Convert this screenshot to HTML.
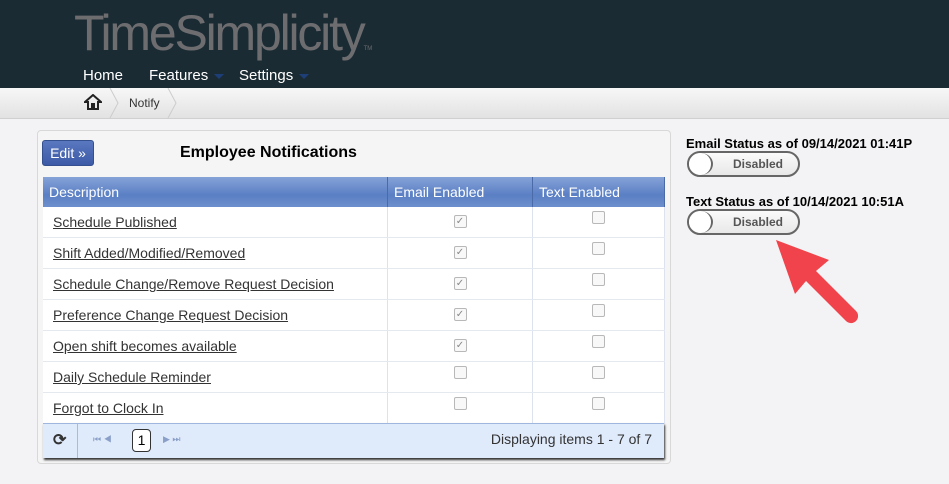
<!DOCTYPE html>
<html><head><style>
body{margin:0;width:949px;height:484px;background:#f3f3f5;font-family:"Liberation Sans",sans-serif;position:relative;overflow:hidden}
.hdr{position:absolute;left:0;top:0;width:949px;height:88px;background:#1b2b33}
.logo{position:absolute;left:74px;top:4px;font-size:50px;color:#6d6d70;letter-spacing:-2.2px}
.nav{position:absolute;top:67px;font-size:15px;color:#fff}
.tri{display:inline-block;border-left:5px solid transparent;border-right:5px solid transparent;border-top:5px solid #1e3e78;margin-left:6px;vertical-align:middle}
.bc{position:absolute;top:88px;left:0;width:949px;height:30px;background:linear-gradient(#f7f7f7,#e2e2e2);border-bottom:1px solid #d0d0d0}
.panel{position:absolute;left:37px;top:130px;width:632px;height:332px;border:1px solid #d8d8d8;border-radius:4px;background:#f5f5f5}
.edit{position:absolute;left:42px;top:140px;width:50px;height:24px;background:linear-gradient(#5a78c0,#3c5aa6);border:1px solid #34508f;border-radius:3px;color:#fff;font-size:14px;line-height:24px;text-align:center}
.title{position:absolute;left:180px;top:144px;font-size:16px;font-weight:bold}
table{position:absolute;left:43px;top:177px;width:622px;border-collapse:collapse;font-size:14px}
th{height:28px;background:linear-gradient(#86a3d8,#5a7fc4 60%,#6d8fcc);color:#fff;font-weight:normal;text-align:left;padding-left:6px;border-right:1px solid #4a6aa8}
td{height:30px;border-bottom:1px solid #e4e8ef;border-right:1px solid #dce3ee;background:#fff;padding:0}
td.d{padding-left:10px}td.d span{text-decoration:underline;color:#333}
td.c{text-align:center}
.cb{display:inline-block;width:11px;height:11px;border:1px solid #b8b8b8;border-radius:2px;background:#f8f8f8;position:relative;top:-3px;font-size:10px;line-height:11px;color:#888}
.ft{position:absolute;left:43px;top:423px;width:621px;height:34px;background:#dfeafb;border-top:1px solid #9fb6dd;box-shadow:1px 2px 2px #333}
.st{position:absolute;left:686px;font-size:13px;font-weight:bold}
.tg{position:absolute;left:687px;width:109px;height:22px;border:2px solid #666;border-radius:13px;background:linear-gradient(#fafafa,#e8e8e8);font-size:12px;color:#555;font-weight:bold}
.tg i{position:absolute;left:0;top:0;width:22px;height:22px;border-right:2px solid #666;border-radius:50%;background:#fff}
.tg span{position:absolute;left:44px;top:4px}
</style></head><body>
<div class="hdr"><div class="logo">TimeSimplicity<span style="font-size:6px;letter-spacing:0">TM</span></div>
<div class="nav" style="left:83px">Home</div><div class="nav" style="left:149px">Features<span class="tri"></span></div><div class="nav" style="left:239px">Settings<span class="tri"></span></div></div>
<div class="bc"><svg style="position:absolute;left:84px;top:6px" width="18" height="16" viewBox="0 0 18 16"><path d="M9 1L1 8h3v7h4v-5h2v5h4V8h3z" fill="none" stroke="#222" stroke-width="2"/></svg>
<svg style="position:absolute;left:108px;top:0" width="70" height="30"><path d="M2 0l8 15-8 15M60 0l8 15-8 15" fill="none" stroke="#ccc"/></svg>
<span style="position:absolute;left:129px;top:8px;font-size:12px;color:#333">Notify</span></div>
<div class="panel"></div>
<div class="edit">Edit »</div><div class="title">Employee Notifications</div>
<table><tr><th style="width:337px">Description</th><th style="width:137px">Email Enabled</th><th>Text Enabled</th></tr>
<tr><td class="d"><span>Schedule Published</span></td><td class="c"><span class="cb">✓</span></td><td class="c"><span class="cb"></span></td></tr>
<tr><td class="d"><span>Shift Added/Modified/Removed</span></td><td class="c"><span class="cb">✓</span></td><td class="c"><span class="cb"></span></td></tr>
<tr><td class="d"><span>Schedule Change/Remove Request Decision</span></td><td class="c"><span class="cb">✓</span></td><td class="c"><span class="cb"></span></td></tr>
<tr><td class="d"><span>Preference Change Request Decision</span></td><td class="c"><span class="cb">✓</span></td><td class="c"><span class="cb"></span></td></tr>
<tr><td class="d"><span>Open shift becomes available</span></td><td class="c"><span class="cb">✓</span></td><td class="c"><span class="cb"></span></td></tr>
<tr><td class="d"><span>Daily Schedule Reminder</span></td><td class="c"><span class="cb"></span></td><td class="c"><span class="cb"></span></td></tr>
<tr><td class="d"><span>Forgot to Clock In</span></td><td class="c"><span class="cb"></span></td><td class="c"><span class="cb"></span></td></tr></table>
<div class="ft"><div style="position:absolute;left:34px;top:0;width:1px;height:34px;background:#aabbd8"></div>
<span style="position:absolute;left:10px;top:6px;font-size:16px;font-weight:bold;color:#333">⟳</span>
<span style="position:absolute;left:50px;top:10px;font-size:9px;color:#8aa0c8">⏮ ◀</span>
<span style="position:absolute;left:89px;top:5px;width:17px;height:21px;border:1px solid #333;border-radius:4px;background:#fff;text-align:center;font-size:14px;line-height:21px">1</span>
<span style="position:absolute;left:120px;top:10px;font-size:9px;color:#8aa0c8">▶ ⏭</span>
<span style="position:absolute;right:12px;top:7px;font-size:14px;color:#333">Displaying items 1 - 7 of 7</span></div>
<div class="st" style="top:136px">Email Status as of 09/14/2021 01:41P</div>
<div class="tg" style="top:151px"><i></i><span>Disabled</span></div>
<div class="st" style="top:194px">Text Status as of 10/14/2021 10:51A</div>
<div class="tg" style="top:209px"><i></i><span>Disabled</span></div>
<svg style="position:absolute;left:770px;top:235px" width="100" height="100"><path d="M6 5L59 25 46 36 86 76a7 7 0 0 1-10 10L36 46 25 59z" fill="#f0434b"/></svg>
</body></html>
